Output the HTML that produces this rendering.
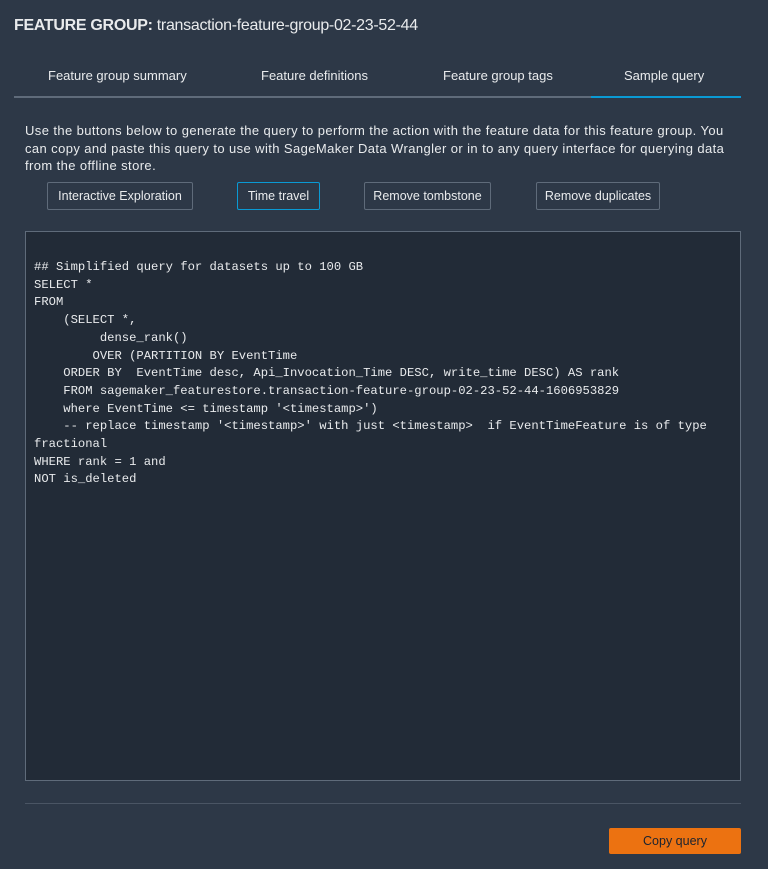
<!DOCTYPE html>
<html><head><style>
body{margin:0;width:768px;height:869px;background:#2d3847;font-family:"Liberation Sans",sans-serif;color:#e9ebed;position:relative;overflow:hidden}
.a{position:absolute}
h1{position:absolute;left:14px;top:17px;margin:0;font-size:16px;font-weight:normal;letter-spacing:-0.3px}
.tab{position:absolute;top:68px;font-size:13px;color:#e9ebed}
.btn{position:absolute;top:182px;height:26px;border:1px solid #5f6b7a;border-radius:2px;font-size:12.5px;line-height:27px;text-align:center;color:#e9ebed;box-sizing:content-box}
pre{position:absolute;left:25px;top:231px;width:714px;height:548px;margin:0;background:#222b37;border:1px solid #5f6b7a;font-family:"Liberation Mono",monospace;font-size:12.2px;line-height:17.7px;color:#e9ebed;padding:0;box-sizing:content-box}
pre span{position:absolute;left:8px;top:27px;white-space:pre}
</style></head><body>
<h1><b>FEATURE GROUP:</b> transaction-feature-group-02-23-52-44</h1>
<div class="tab" style="left:48px">Feature group summary</div>
<div class="tab" style="left:261px">Feature definitions</div>
<div class="tab" style="left:443px">Feature group tags</div>
<div class="tab" style="left:624px">Sample query</div>
<div class="a" style="left:14px;top:96px;width:727px;height:2px;background:#5f6b7a"></div>
<div class="a" style="left:591px;top:96px;width:150px;height:2px;background:#0a9ad4"></div>
<div class="a" style="left:25px;top:122px;width:740px;font-size:13px;line-height:17.5px;white-space:nowrap;letter-spacing:0.4px">Use the buttons below to generate the query to perform the action with the feature data for this feature group. You<br>can copy and paste this query to use with SageMaker Data Wrangler or in to any query interface for querying data<br>from the offline store.</div>
<div class="btn" style="left:47px;width:144px">Interactive Exploration</div>
<div class="btn" style="left:237px;width:81px;border-color:#0a9ad4">Time travel</div>
<div class="btn" style="left:364px;width:125px">Remove tombstone</div>
<div class="btn" style="left:536px;width:122px">Remove duplicates</div>
<pre><span>## Simplified query for datasets up to 100 GB
SELECT *
FROM
    (SELECT *,
         dense_rank()
        OVER (PARTITION BY EventTime
    ORDER BY  EventTime desc, Api_Invocation_Time DESC, write_time DESC) AS rank
    FROM sagemaker_featurestore.transaction-feature-group-02-23-52-44-1606953829
    where EventTime &lt;= timestamp '&lt;timestamp&gt;')
    -- replace timestamp '&lt;timestamp&gt;' with just &lt;timestamp&gt;  if EventTimeFeature is of type
fractional
WHERE rank = 1 and
NOT is_deleted</span></pre>
<div class="a" style="left:25px;top:803px;width:716px;height:1px;background:#4a5564"></div>
<div class="a" style="left:609px;top:828px;width:132px;height:26px;background:#ec7211;border-radius:2px;color:#1a2330;font-size:12.5px;line-height:27px;text-align:center">Copy query</div>
</body></html>
